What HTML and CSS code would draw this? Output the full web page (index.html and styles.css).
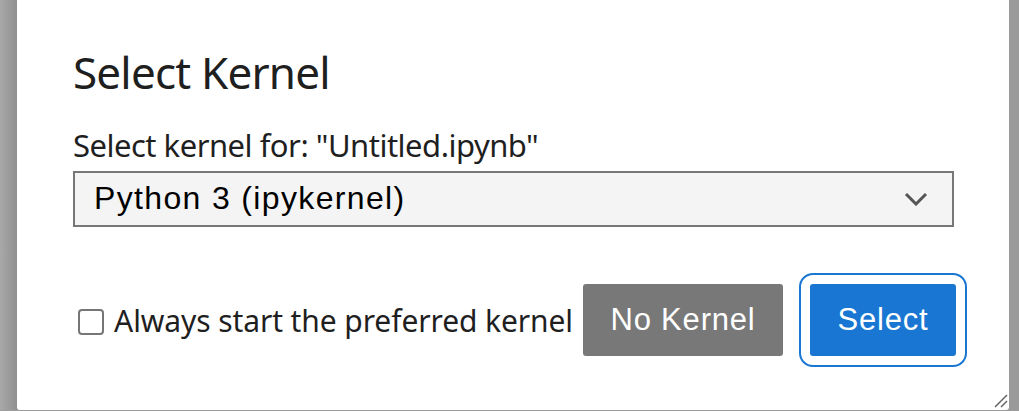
FILE: index.html
```html
<!DOCTYPE html>
<html>
<head>
<meta charset="utf-8">
<link rel="stylesheet" href="styles.css">
</head>
<body>
<div class="backdrop">
  <div class="dialog">
    <h1 class="title">Select Kernel</h1>
    <div class="body">
      <div class="label">Select kernel for: "Untitled.ipynb"</div>
      <div class="select">
        <span class="select-value">Python 3 (ipykernel)</span>
        <svg class="chevron" width="24" height="14" viewBox="0 0 24 14"><path d="M2 2 L12 12 L22 2" fill="none" stroke="#555" stroke-width="3"/></svg>
      </div>
    </div>
    <div class="footer">
      <label class="check"><span class="box"></span><span class="check-text">Always start the preferred kernel</span></label>
      <button class="btn btn-gray">No Kernel</button>
      <button class="btn btn-blue">Select</button>
    </div>
    <svg class="resize" width="14" height="14" viewBox="0 0 14 14"><path d="M1 13 L13 1 M7 13 L13 7" stroke="#666" stroke-width="1.5" fill="none"/></svg>
  </div>
</div>
</body>
</html>
```
FILE: styles.css
```css
html, body {
  margin: 0;
  padding: 0;
  height: 100%;
  overflow: hidden;
}
body {
  background: #9d9d9d;
}
.backdrop {
  height: 410px;
  padding-left: 17px;
  padding-right: 10px;
  background: linear-gradient(to right, #a9a9a9 0, #8f8f8f 17px, #9a9a9a 17px);
}
.dialog {
  position: relative;
  box-sizing: border-box;
  width: 992px;
  height: 410px;
  background: #fff;
  border-radius: 0 0 3px 3px;
  padding: 46px 55px 0 56px;
  color: #1f1f1f;
  font-family: "Noto Sans", "Open Sans", sans-serif;
}
.title {
  margin: 0;
  font-size: 44px;
  line-height: 52px;
  font-weight: 400;
  letter-spacing: -0.8px;
}
.body {
  margin-top: 29px;
}
.label {
  font-size: 31px;
  line-height: 36px;
  letter-spacing: -0.5px;
}
.select {
  margin-top: 8px;
  box-sizing: border-box;
  height: 56px;
  border: 2px solid #777;
  background: #f4f4f4;
  display: flex;
  align-items: center;
  justify-content: space-between;
  padding: 0 24px 2px 19px;
}
.select-value {
  font-family: "Liberation Sans", Arial, sans-serif;
  font-size: 32px;
  letter-spacing: 1.35px;
  color: #000;
}
.chevron {
  display: block;
  margin-top: 2px;
}
.footer {
  margin-top: 57px;
  margin-right: -2px;
  display: flex;
  align-items: center;
  justify-content: flex-end;
}
.check {
  display: flex;
  align-items: center;
  font-size: 30px;
  line-height: 36px;
  letter-spacing: -0.1px;
  margin-top: 1px;
  white-space: nowrap;
}
.box {
  box-sizing: border-box;
  width: 26px;
  height: 26px;
  border: 2px solid #767676;
  border-radius: 4px;
  margin-right: 10px;
  margin-top: 2px;
}
.btn {
  box-sizing: border-box;
  height: 72px;
  border: none;
  border-radius: 3px;
  padding: 0;
  font-family: "Liberation Sans", Arial, sans-serif;
  font-size: 31px;
  letter-spacing: 0.8px;
  color: #fff;
  white-space: nowrap;
  text-align: center;
}
.btn-gray {
  background: #787878;
  width: 200px;
  margin-left: 10px;
}
.btn-blue {
  background: #1976d2;
  width: 146px;
  margin-left: 27px;
  outline: 2px solid #1976d2;
  outline-offset: 9px;
}
.resize {
  position: absolute;
  right: 1px;
  bottom: 2px;
}
```
